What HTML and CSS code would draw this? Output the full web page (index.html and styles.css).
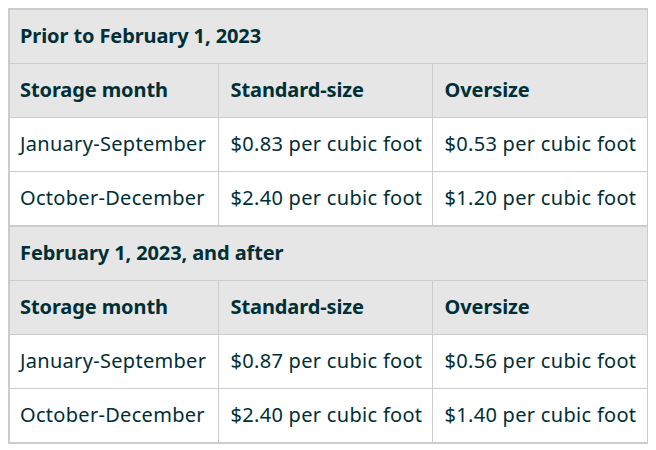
FILE: index.html
```html
<!DOCTYPE html>
<html>
<head>
<meta charset="utf-8">
<link rel="stylesheet" href="styles.css">
</head>
<body>
<table class="fees">
  <colgroup>
    <col class="c1"><col class="c2"><col class="c3">
  </colgroup>
  <tbody>
    <tr class="section"><th colspan="3">Prior to February 1, 2023</th></tr>
    <tr class="head"><th>Storage month</th><th>Standard-size</th><th>Oversize</th></tr>
    <tr><td>January-September</td><td>$0.83 per cubic foot</td><td>$0.53 per cubic foot</td></tr>
    <tr><td>October-December</td><td>$2.40 per cubic foot</td><td>$1.20 per cubic foot</td></tr>
    <tr class="section second"><th colspan="3">February 1, 2023, and after</th></tr>
    <tr class="head"><th>Storage month</th><th>Standard-size</th><th>Oversize</th></tr>
    <tr><td>January-September</td><td>$0.87 per cubic foot</td><td>$0.56 per cubic foot</td></tr>
    <tr><td>October-December</td><td>$2.40 per cubic foot</td><td>$1.40 per cubic foot</td></tr>
  </tbody>
</table>
</body>
</html>
```
FILE: styles.css
```css
body {
  margin: 8px;
  background: #ffffff;
  font-family: "Noto Sans", "Open Sans", sans-serif;
  color: #002f36;
}
.fees {
  border-collapse: collapse;
  table-layout: fixed;
  width: 639px;
  border: 2px solid #cccccc;
  font-size: 20px;
}
.c1 { width: 209px; }
.c2 { width: 214px; }
.c3 { width: 216px; }
.fees th,
.fees td {
  border: 1px solid #cccccc;
  padding: 12px 10px 14px 10px;
  line-height: 27px;
  text-align: left;
  white-space: nowrap;
  vertical-align: middle;
}
.fees td + td,
.fees th + th {
  padding-left: 12px;
}
.fees th {
  background: #e6e6e6;
  font-weight: 700;
  letter-spacing: -0.1px;
}
.fees td {
  font-weight: 400;
  letter-spacing: 0.3px;
}
.section.second th {
  border-top: 2px solid #cccccc;
}
```
